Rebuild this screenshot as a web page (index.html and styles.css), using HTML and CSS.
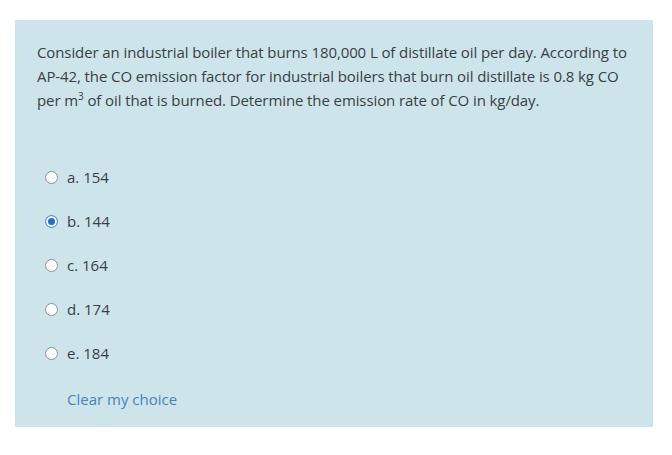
FILE: index.html
```html
<!DOCTYPE html>
<html>
<head>
<meta charset="utf-8">
<link rel="stylesheet" href="styles.css">
</head>
<body>
<div class="que">
  <p class="qtext">Consider an industrial boiler that burns 180,000 L of distillate oil per day. According to AP-42, the CO emission factor for industrial boilers that burn oil distillate is 0.8 kg CO per m<sup>3</sup> of oil that is burned. Determine the emission rate of CO in kg/day.</p>
  <div class="answers">
    <label class="opt"><span class="radio"></span><span>a. 154</span></label>
    <label class="opt"><span class="radio checked"></span><span>b. 144</span></label>
    <label class="opt"><span class="radio"></span><span>c. 164</span></label>
    <label class="opt"><span class="radio"></span><span>d. 174</span></label>
    <label class="opt"><span class="radio"></span><span>e. 184</span></label>
  </div>
  <a class="clear">Clear my choice</a>
</div>
</body>
</html>
```

FILE: styles.css
```css
html, body { margin: 0; padding: 0; background: #fff; }
body { font-family: "Open Sans", "Noto Sans", sans-serif; color: #3a3f44; font-size: 15px; }
.que {
  margin: 20px 0 0 15px;
  width: 638px;
  height: 407px;
  box-sizing: border-box;
  background: #cde5ea;
  padding: 20px 16px 0 22px;
}
.qtext { margin: 0; line-height: 24px; letter-spacing: -0.1px; }
.qtext sup { font-size: 10px; line-height: 0; vertical-align: 6px; }
.answers { margin-top: 53px; padding-left: 8px; display: flex; flex-direction: column; gap: 20px; }
.opt { display: flex; align-items: center; gap: 9px; line-height: 24px; }
.radio {
  width: 13px; height: 13px; box-sizing: border-box;
  border: 1px solid #8a8d90; border-radius: 50%; background: #fff;
}
.radio.checked { border: 1px solid #5b95d8; background: #1f6fd0; box-shadow: inset 0 0 0 2px #fff; }
.clear { display: block; margin: 22px 0 0 30px; color: #4a82ba; line-height: 24px; }
```
